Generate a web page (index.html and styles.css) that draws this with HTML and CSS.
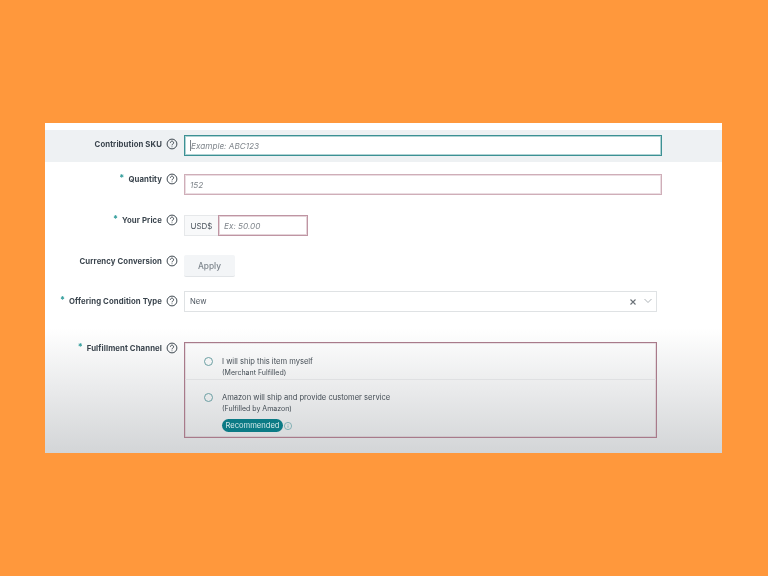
FILE: index.html
```html
<!DOCTYPE html>
<html lang="en">
<head>
<meta charset="utf-8">
<title>Offer details</title>
<link rel="stylesheet" href="styles.css">
</head>
<body>
<main class="panel">
  <div class="row row-sku">
    <div class="label"><span class="name">Contribution SKU</span><svg class="help" viewBox="0 0 12 12"><circle cx="6" cy="6" r="4.9"/><path d="M4.4 4.7a1.6 1.6 0 1 1 2.4 1.4c-.6.35-.8.6-.8 1.2"/><path d="M6 8.5v.7"/></svg></div>
    <div class="field input focus"><span class="caret"></span><span class="ph">Example: ABC123</span></div>
  </div>
  <div class="row row-qty">
    <div class="label"><span class="req">*</span><span class="name">Quantity</span><svg class="help" viewBox="0 0 12 12"><circle cx="6" cy="6" r="4.9"/><path d="M4.4 4.7a1.6 1.6 0 1 1 2.4 1.4c-.6.35-.8.6-.8 1.2"/><path d="M6 8.5v.7"/></svg></div>
    <div class="field input error"><span class="ph">152</span></div>
  </div>
  <div class="row row-price">
    <div class="label"><span class="req">*</span><span class="name">Your Price</span><svg class="help" viewBox="0 0 12 12"><circle cx="6" cy="6" r="4.9"/><path d="M4.4 4.7a1.6 1.6 0 1 1 2.4 1.4c-.6.35-.8.6-.8 1.2"/><path d="M6 8.5v.7"/></svg></div>
    <div class="price">
      <span class="addon">USD$</span>
      <div class="input error price-input"><span class="ph">Ex: 50.00</span></div>
    </div>
  </div>
  <div class="row row-currency">
    <div class="label"><span class="name">Currency Conversion</span><svg class="help" viewBox="0 0 12 12"><circle cx="6" cy="6" r="4.9"/><path d="M4.4 4.7a1.6 1.6 0 1 1 2.4 1.4c-.6.35-.8.6-.8 1.2"/><path d="M6 8.5v.7"/></svg></div>
    <button class="apply" type="button">Apply</button>
  </div>
  <div class="row row-cond">
    <div class="label"><span class="req">*</span><span class="name">Offering Condition Type</span><svg class="help" viewBox="0 0 12 12"><circle cx="6" cy="6" r="4.9"/><path d="M4.4 4.7a1.6 1.6 0 1 1 2.4 1.4c-.6.35-.8.6-.8 1.2"/><path d="M6 8.5v.7"/></svg></div>
    <div class="select">
      <span class="value">New</span>
      <svg class="clear" viewBox="0 0 8 8"><path d="M1.5 1.5l5 5M6.500 1.500l-5 5"/></svg>
      <svg class="chev" viewBox="0 0 10 6"><path d="M1.500 1l3.500 3.500L8.500 1"/></svg>
    </div>
  </div>
  <div class="row row-ful">
    <div class="label"><span class="req">*</span><span class="name">Fulfillment Channel</span><svg class="help" viewBox="0 0 12 12"><circle cx="6" cy="6" r="4.9"/><path d="M4.4 4.7a1.6 1.6 0 1 1 2.4 1.4c-.6.35-.8.6-.8 1.2"/><path d="M6 8.5v.7"/></svg></div>
    <div class="channels">
      <div class="option first">
        <span class="radio"></span>
        <div class="opt-text">
          <div class="opt-title">I will ship this item myself</div>
          <div class="opt-sub">(Merchant Fulfilled)</div>
        </div>
      </div>
      <div class="option">
        <span class="radio"></span>
        <div class="opt-text">
          <div class="opt-title">Amazon will ship and provide customer service</div>
          <div class="opt-sub">(Fulfilled by Amazon)</div>
          <div class="badge-row"><span class="badge">Recommended</span><svg class="info" viewBox="0 0 10 10"><circle cx="5" cy="5" r="3.600"/><path d="M5 4.500v2.200M5 3v.6"/></svg></div>
        </div>
      </div>
    </div>
  </div>
</main>
</body>
</html>
```
FILE: styles.css
```css
* { box-sizing: border-box; }
html, body { margin: 0; height: 100%; }
body {
  width: 768px;
  height: 576px;
  background: #ff983c;
  padding: 123px 46px 123px 45px;
  font-family: Inter, "Liberation Sans", sans-serif;
  overflow: hidden;
}
.panel {
  height: 330px;
  padding-top: 7px;
  background: linear-gradient(to bottom, #fff 0, #fff 205px, #d3d5d7 330px);
  filter: blur(0.5px);
}
.row { display: flex; align-items: flex-start; }
.label {
  width: 139px;
  flex: none;
  display: flex;
  justify-content: flex-end;
  align-items: center;
  height: 14px;
  color: #3a444d;
  font-size: 7.750px;
  font-weight: 700;
  letter-spacing: .1px;
  white-space: nowrap;
}
.req {
  color: #2f9c9a;
  font-size: 9px;
  font-weight: 700;
  margin-right: 4px;
  position: relative;
  top: -2px;
}
.help {
  width: 12px;
  height: 12px;
  flex: none;
  margin-left: 4px;
  margin-right: 6px;
  fill: none;
  stroke: #3f4951;
  stroke-width: 1;
}
.row-sku {
  height: 32px;
  padding-top: 8px;
  background: #eef1f3;
}
.field { width: 478px; }
.input {
  height: 21px;
  background: #fff;
  display: flex;
  align-items: center;
  padding-left: 5px;
  font-size: 8.200px;
  font-style: italic;
  color: #7f858b;
}
.focus { border: 1px solid #3c9194; box-shadow: inset 0 0 0 1px rgba(79, 157, 159, .45); margin-top: -3px; }
.error { border: 1px solid #cfaeb8; box-shadow: inset 0 0 0 1px rgba(216, 188, 197, .5); }
.caret { width: 1px; height: 11px; background: #7f858b; }
.row-qty { margin-top: 12px; height: 21px; }
.row-price { margin-top: 20px; height: 21px; }
.row-currency { margin-top: 19px; height: 22px; }
.row-cond { margin-top: 14px; height: 21px; }
.row-ful { margin-top: 30px; }
.row-sku .label { margin-top: -1px; }
.row-qty .label { margin-top: -2px; }
.row-price .label { margin-top: -2px; }
.row-currency .label { margin-top: -1px; }
.row-cond .label { margin-top: 3px; }
.row-ful .label { margin-top: -1px; }
.price { display: flex; }
.addon {
  width: 34px;
  height: 21px;
  display: flex;
  align-items: center;
  justify-content: center;
  font-size: 8px;
  color: #4e5760;
  background: #f8f9fa;
  border: 1px solid #e6e8ea;
  border-right: 0;
}
.price-input { width: 90px; border-color: #bf95a3; box-shadow: inset 0 0 0 1px rgba(203, 169, 180, .5); }
.apply {
  width: 51px;
  height: 22px;
  padding: 0;
  border: 0;
  border-bottom: 1px solid #e1e4e7;
  border-radius: 2px;
  background: #f3f5f7;
  color: #7d858c;
  font: 500 8.300px Inter, "Liberation Sans", sans-serif;
}
.select {
  width: 473px;
  height: 21px;
  display: flex;
  align-items: center;
  padding: 0 3px 0 5px;
  border: 1px solid #dfe2e4;
  background: #fff;
  font-size: 7.700px;
  color: #4e5760;
}
.value { flex: 1; }
.clear { width: 8px; height: 8px; fill: none; stroke: #6a7177; stroke-width: 1.100; margin-right: 6px; }
.chev { width: 10px; height: 6px; fill: none; stroke: #a4a9ae; stroke-width: .9; margin-bottom: 2px; }
.channels {
  width: 473px;
  height: 96px;
  border: 1px solid #a87a8a;
  box-shadow: inset 0 0 0 .5px rgba(168, 122, 138, .4);
}
.option { display: flex; padding-left: 19px; color: #434c54; }
.first { height: 37px; border-bottom: 1px solid #dfe0e2; }
.radio {
  width: 9px;
  height: 9px;
  flex: none;
  margin-top: 14px;
  border: 1px solid #6b9fa3;
  border-radius: 50%;
}
.option:not(.first) .radio { margin-top: 13px; }
.opt-text { margin-left: 9px; padding-top: 13px; }
.option:not(.first) .opt-text { padding-top: 12px; }
.opt-title { font-size: 7.550px; line-height: 11px; white-space: nowrap; }
.opt-sub { font-size: 7px; line-height: 11px; white-space: nowrap; }
.badge-row { display: flex; align-items: center; margin-top: 5px; }
.badge {
  width: 61px;
  height: 13px;
  border-radius: 7px;
  background: #0b7a85;
  color: #d3e9ea;
  font-size: 7.600px;
  line-height: 13px;
  text-align: center;
}
.info { width: 10px; height: 10px; fill: none; stroke: #5f9ea3; stroke-width: .7; }
```
